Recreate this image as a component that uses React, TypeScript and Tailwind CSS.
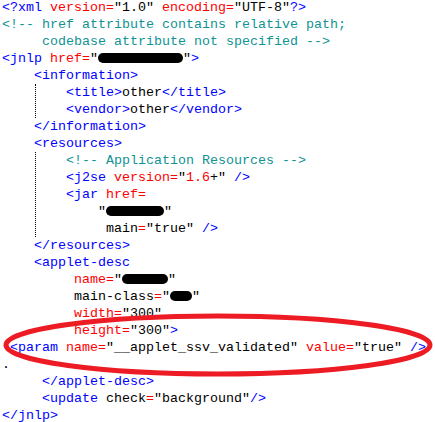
import React from "react";

// syntax colours
function T({ children }: { children: React.ReactNode }) {
  return <span className="text-[#0000ff]">{children}</span>;
}

function A({ children }: { children: React.ReactNode }) {
  return <span className="text-[#ff0000]">{children}</span>;
}

function C({ children }: { children: React.ReactNode }) {
  return <span className="text-[#0f9393]">{children}</span>;
}

function Blob({ w }: { w: string }) {
  return (
    <span
      className={`inline-block h-[10px] rounded-full bg-black align-[-1px] ${w}`}
    />
  );
}

function Line({ children }: { children?: React.ReactNode }) {
  return <div className="h-[17px] whitespace-pre">{children}</div>;
}

export default function App() {
  return (
    <div className="relative h-[422px] w-[435px] overflow-hidden bg-white font-['Liberation_Mono',monospace] text-[13.333px] leading-[17px] text-black">
      <div className="-mt-[1px] pl-[2px]">
        <Line>
          <T>&lt;?xml</T> <A>version=</A>"1.0" <A>encoding=</A>"UTF-8"
          <T>?&gt;</T>
        </Line>
        <Line>
          <C>&lt;!-- href attribute contains relative path;</C>
        </Line>
        <Line>
          <C>     codebase attribute not specified --&gt;</C>
        </Line>
        <Line>
          <T>&lt;jnlp</T> <A>href=</A>"<Blob w="w-[85px]" />"<T>&gt;</T>
        </Line>
        <Line>
          <T>    &lt;information&gt;</T>
        </Line>

        {/* information children */}
        <div className="ml-[33px] border-l border-dotted border-black pl-[30px]">
          <Line>
            <T>&lt;title&gt;</T>other<T>&lt;/title&gt;</T>
          </Line>
          <Line>
            <T>&lt;vendor&gt;</T>other<T>&lt;/vendor&gt;</T>
          </Line>
        </div>

        <Line>
          <T>    &lt;/information&gt;</T>
        </Line>
        <Line>
          <T>    &lt;resources&gt;</T>
        </Line>

        {/* resources children */}
        <div className="ml-[33px] border-l border-dotted border-black pl-[30px]">
          <Line>
            <C>&lt;!-- Application Resources --&gt;</C>
          </Line>
          <Line>
            <T>&lt;j2se</T> <A>version=</A>"<A>1.6</A>+" <T>/&gt;</T>
          </Line>
          <Line>
            <T>&lt;jar</T> <A>href=</A>
          </Line>
          <Line>
            {"    "}"<Blob w="w-[58px]" />"
          </Line>
          <Line>
            {"     "}main<A>=</A>"true" <T>/&gt;</T>
          </Line>
        </div>

        <Line>
          <T>    &lt;/resources&gt;</T>
        </Line>
        <Line>
          <T>    &lt;applet-desc</T>
        </Line>
        <Line>
          {"         "}
          <A>name=</A>"<Blob w="w-[46px]" />"
        </Line>
        <Line>
          {"         "}main-class<A>=</A>"<Blob w="w-[22px]" />"
        </Line>
        <Line>
          {"         "}
          <A>width=</A>"300"
        </Line>
        <Line>
          {"         "}
          <A>height=</A>"300"<T>&gt;</T>
        </Line>
        <Line>
          {" "}
          <T>&lt;param</T> <A>name=</A>"__applet_ssv_validated" <A>value=</A>
          "true" <T>/&gt;</T>
        </Line>
        <Line>.</Line>
        <Line>
          <T>     &lt;/applet-desc&gt;</T>
        </Line>
        <Line>
          {"     "}
          <T>&lt;update</T> check<A>=</A>"background"<T>/&gt;</T>
        </Line>
        <Line>
          <T>&lt;/jnlp&gt;</T>
        </Line>
      </div>

      {/* red marker ring */}
      <svg
        className="pointer-events-none absolute left-0 top-0"
        width="435"
        height="422"
        viewBox="0 0 435 422"
      >
        <ellipse
          cx="218"
          cy="345"
          rx="212"
          ry="29"
          fill="none"
          stroke="#ed1c24"
          strokeWidth="5"
        />
      </svg>
    </div>
  );
}
